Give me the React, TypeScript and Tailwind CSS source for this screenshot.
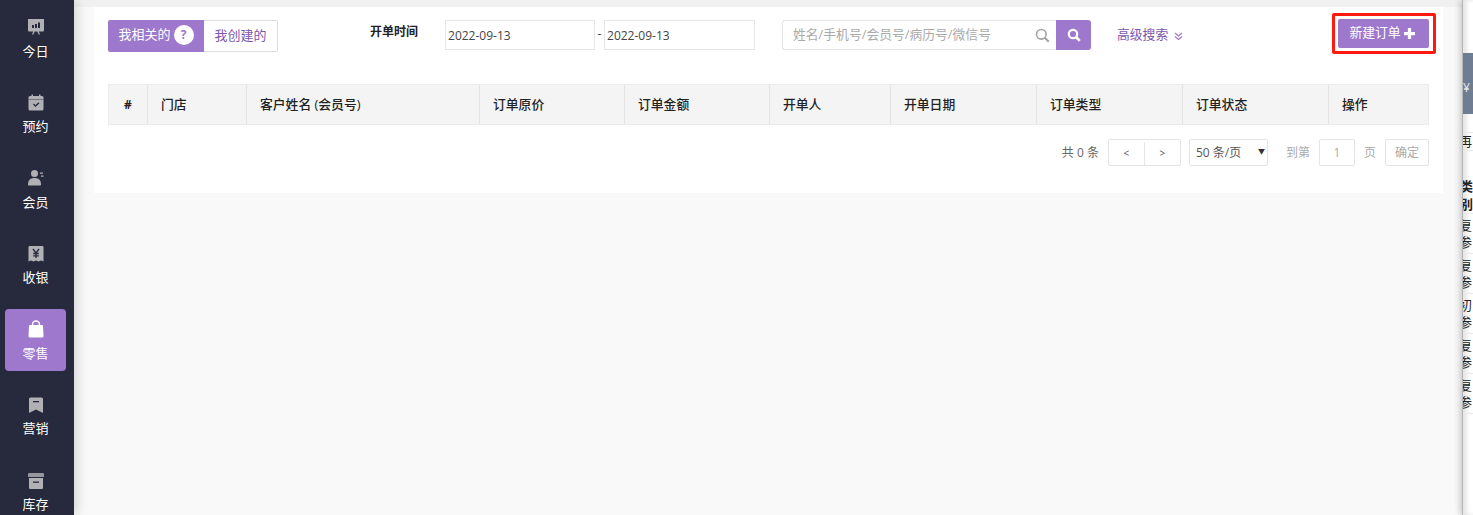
import React from "react";

const cjk = "font-['Open_Sans','Noto_Sans_CJK_SC',sans-serif]";

function BoardIcon() {
  return (
    <svg width="18" height="18" viewBox="0 0 18 18">
      <path fill="currentColor" d="M1 1h16v11.500a1 1 0 0 1-1 1h-4.200l1.200 3h-1.300l-1.400-3H7.700l-1.400 3H5l1.200-3H2a1 1 0 0 1-1-1z" />
      <path fill="#272a3d" d="M5 7h2v3H5zM8 6h2v4H8zM11 4.500h2V10h-2z" />
    </svg>
  );
}

function CalendarIcon() {
  return (
    <svg width="18" height="18" viewBox="0 0 18 18">
      <path fill="currentColor" d="M3 2h1.500V0.500H6V2h6V0.500h1.500V2H15a1.500 1.500 0 0 1 1.500 1.500V15a1.500 1.500 0 0 1-1.500 1.500H3A1.500 1.500 0 0 1 1.500 15V3.500A1.500 1.500 0 0 1 3 2z" />
      <path fill="#272a3d" d="M1.500 5h15v.8h-15z" opacity=".55" />
      <path fill="none" stroke="#272a3d" strokeWidth="1.300" d="M6.500 10l2 2 3.500-3.200" />
    </svg>
  );
}

function MemberIcon() {
  return (
    <svg width="18" height="18" viewBox="0 0 18 18">
      <circle cx="7.500" cy="4.500" r="3.500" fill="currentColor" />
      <path fill="currentColor" d="M1 15.500C1 11 3.500 9 7.500 9s6.500 2 6.500 6.500c0 .6-.5 1-1 1H2c-.5 0-1-.4-1-1z" />
      <path fill="currentColor" d="M13 3.500h3v1.200h-3zM14 6.500h2.500v1.200H14z" />
    </svg>
  );
}

function CashIcon() {
  return (
    <svg width="18" height="18" viewBox="0 0 18 18">
      <path fill="currentColor" d="M2.500 1h13a1 1 0 0 1 1 1v14.500l-2.500-1-2.500 1-2.500-1-2.500 1-2.500-1-2.500 1V2a1 1 0 0 1 1-1z" />
      <path fill="none" stroke="#272a3d" strokeWidth="1.300" d="M6 4l3 4 3-4M9 8v5M6.200 8.500h5.600M6.200 10.800h5.600" />
    </svg>
  );
}

function BagIcon() {
  return (
    <svg width="18" height="18" viewBox="0 0 18 18">
      <path fill="currentColor" d="M3 5h12a1 1 0 0 1 1 1l.5 10a1.500 1.500 0 0 1-1.500 1.500H3A1.500 1.500 0 0 1 1.500 16L2 6a1 1 0 0 1 1-1z" />
      <path fill="none" stroke="currentColor" strokeWidth="1.400" d="M5.500 7V4.500a3.500 3.500 0 0 1 7 0V7" />
    </svg>
  );
}

function BookmarkIcon() {
  return (
    <svg width="18" height="18" viewBox="0 0 18 18">
      <path fill="currentColor" d="M3.500 1.500h11A1.500 1.500 0 0 1 16 3v14l-7-3.500L2 17V3a1.500 1.500 0 0 1 1.500-1.500z" />
      <path fill="#272a3d" d="M6 5h6v1.300H6z" />
    </svg>
  );
}

function BoxIcon() {
  return (
    <svg width="18" height="18" viewBox="0 0 18 18">
      <path fill="currentColor" d="M2 1h14a1 1 0 0 1 1 1v3H1V2a1 1 0 0 1 1-1z" opacity=".8" />
      <path fill="currentColor" d="M2 6h14v10a1 1 0 0 1-1 1H3a1 1 0 0 1-1-1z" />
      <path fill="#272a3d" d="M6 9.500h6v1.300H6z" />
    </svg>
  );
}

const menu = [
  { label: "今日", icon: <BoardIcon /> },
  { label: "预约", icon: <CalendarIcon /> },
  { label: "会员", icon: <MemberIcon /> },
  { label: "收银", icon: <CashIcon /> },
  { label: "零售", icon: <BagIcon />, active: true },
  { label: "营销", icon: <BookmarkIcon /> },
  { label: "库存", icon: <BoxIcon /> },
];

const columns = [
  { title: "#", width: "w-[39px]", center: true },
  { title: "门店", width: "w-[99px]" },
  { title: "客户姓名 (会员号)", width: "w-[233px]" },
  { title: "订单原价", width: "w-[145px]" },
  { title: "订单金额", width: "w-[145px]" },
  { title: "开单人", width: "w-[121px]" },
  { title: "开单日期", width: "w-[146px]" },
  { title: "订单类型", width: "w-[146px]" },
  { title: "订单状态", width: "w-[146px]" },
  { title: "操作", width: "w-[101px]" },
];

// what shows of the next panel at the right edge
const sideRows = [
  { a: "复", b: "参" },
  { a: "复", b: "参" },
  { a: "初", b: "参" },
  { a: "复", b: "参" },
  { a: "复", b: "参" },
];

function Sidebar() {
  return (
    <aside className="relative z-10 flex h-full w-[74px] shrink-0 flex-col gap-[13.6px] overflow-hidden bg-[#272a3d] px-[5px] pt-[7px] shadow-[0_0_14px_rgba(0,0,0,0.22)]">
      {menu.map((item) => (
        <div
          key={item.label}
          className={
            item.active
              ? "flex h-[62px] w-[61px] shrink-0 flex-col items-center rounded-[4px] bg-[#9e78cd] pt-[11px] text-white"
              : "flex h-[62px] w-[61px] shrink-0 flex-col items-center pt-[11px] text-[#b0b0b5]"
          }
        >
          {item.icon}
          <span className="mt-[5.5px] text-[13px] leading-[18px] text-white">{item.label}</span>
        </div>
      ))}
    </aside>
  );
}

function Toolbar() {
  return (
    <div className="flex h-[32px] items-start">
      <div className="flex h-[32px] w-[170px] text-[13px]">
        <div className="flex w-[96px] items-center justify-center gap-[3px] rounded-l-[2px] bg-[#9e78cd] pb-[2px] text-white">
          我相关的
          <span className="flex h-[20px] w-[20px] items-center justify-center rounded-full bg-white text-[12px] font-bold text-[#9e78cd]">?</span>
        </div>
        <div className="flex flex-1 items-center justify-center rounded-r-[2px] border border-l-0 border-[#dddddd] bg-white text-[#7d57ad]">我创建的</div>
      </div>

      <span className="ml-[92px] mt-[2px] text-[12px] leading-[20px] font-bold text-[#222222]">开单时间</span>

      <div className="ml-[27px] flex h-[30px] w-[150px] items-center border border-[#e6e6e6] pl-[2px] pt-[2px] text-[12px] text-[#444444]">2022-09-13</div>
      <span className="w-[9px] pt-[5px] text-center text-[12px] leading-[18px] text-[#444444]">-</span>
      <div className="flex h-[30px] w-[151px] items-center border border-[#e6e6e6] pl-[2px] pt-[2px] text-[12px] text-[#444444]">2022-09-13</div>

      <div className="ml-[27px] flex h-[30px] w-[274px] items-center justify-between rounded-l-[3px] border border-r-0 border-[#e6e6e6] pl-[10px] pr-[6px] text-[12.8px] text-[#aaaaaa]">
        姓名/手机号/会员号/病历号/微信号
        <svg width="15" height="15" viewBox="0 0 15 15" fill="none" stroke="#a3a3a3" strokeWidth="1.600">
          <circle cx="6.300" cy="6.300" r="4.800" />
          <path d="M9.800 9.800l4 4" strokeWidth="2" />
        </svg>
      </div>
      <div className="flex h-[30px] w-[35px] items-center justify-center rounded-r-[3px] bg-[#9e78cd]">
        <svg width="14" height="14" viewBox="0 0 14 14" fill="none" stroke="#ffffff" strokeWidth="2.200">
          <circle cx="6" cy="6" r="4.200" />
          <path d="M9 9l3.800 3.800" strokeWidth="2.600" />
        </svg>
      </div>

      <div className="ml-[26px] flex h-[30px] items-center text-[12.8px] text-[#7d57ad]">
        高级搜索
        <svg className="ml-[6px] mt-[2px]" width="9" height="9" viewBox="0 0 9 9" fill="none" stroke="#9e78cd" strokeWidth="1.200">
          <path d="M1 1l3.500 3 3.500-3M1 4.500l3.500 3 3.500-3" />
        </svg>
      </div>

      <div className="-mr-[7px] -mt-[7px] ml-auto rounded-[2px] border-[3px] border-[#ff1a0f] p-[3px] pr-[4px]">
        <button className="flex h-[29px] w-[91px] items-center justify-center gap-[2px] rounded-[2px] bg-[#9e78cd] pb-[1px] pr-[2px] text-[12.8px] text-white">
          新建订单
          <svg width="13" height="13" viewBox="0 0 12 12" fill="#ffffff">
            <path d="M4.500 1h3v3.500H11v3H7.500V11h-3V7.500H1v-3h3.500z" />
          </svg>
        </button>
      </div>
    </div>
  );
}

function OrderTable() {
  return (
    <div className="mt-[32px] flex h-[41px] w-[1321px] border border-[#ebebeb] bg-[#f4f4f4]">
      {columns.map((col) => (
        <div
          key={col.title}
          className={
            col.center
              ? `${col.width} flex shrink-0 items-center justify-center border-r border-[#e4e4e4] text-[12px] font-bold text-[#222222]`
              : `${col.width} flex shrink-0 items-center border-r border-[#e4e4e4] pl-[13px] text-[12.8px] font-medium text-[#222222] last:border-r-0`
          }
        >
          {col.title}
        </div>
      ))}
    </div>
  );
}

function Pagination() {
  return (
    <div className="mt-[14px] flex h-[27px] items-center justify-end text-[12px] text-[#666666]">
      <span>共 0 条</span>
      <div className="ml-[9px] flex h-[27px] w-[73px] rounded-[2px] border border-[#e4e4e4] pt-[2px] text-[10px] text-[#555555]">
        <span className="flex flex-1 items-center justify-center border-r border-[#e4e4e4]">&lt;</span>
        <span className="flex flex-1 items-center justify-center">&gt;</span>
      </div>
      <div className="ml-[8px] flex h-[27px] w-[79px] items-center justify-between rounded-[2px] border border-[#e4e4e4] pl-[6px] pr-[2px] text-[#555555]">
        50 条/页
        <span className="text-[7px] text-[#333333]">▼</span>
      </div>
      <span className="ml-[18px] text-[#aaaaaa]">到第</span>
      <span className="ml-[9px] flex h-[27px] w-[36px] items-center justify-center rounded-[2px] border border-[#e4e4e4] text-[#aaaaaa]">1</span>
      <span className="ml-[9px] text-[#aaaaaa]">页</span>
      <span className="ml-[9px] flex h-[27px] w-[44px] items-center justify-center rounded-[2px] border border-[#e4e4e4] text-[#aaaaaa]">确定</span>
    </div>
  );
}

function RightPeek() {
  return (
    <aside className="relative z-10 h-full w-[11px] shrink-0 overflow-hidden border-l border-[#b5b5b5] bg-white pt-[53px] shadow-[-2px_0_6px_rgba(0,0,0,0.2),inset_4px_0_4px_rgba(0,0,0,0.1)]">
      <div className="flex h-[61px] items-center bg-[#6f7d92] pt-[8px] text-[12px] leading-none text-[#e6e6e6]">¥</div>
      <div className="h-[19px] border-b border-[#e8e8e8]"></div>
      <div className="flex h-[18px] items-center border-b border-[#e8e8e8] text-[13px] text-[#222222]">
        <span className="-ml-[4px] whitespace-nowrap">再</span>
      </div>
      <div className="flex h-[63px] flex-col justify-end border-b border-[#e8e8e8] text-[13px] leading-[18px] font-bold text-[#222222]">
        <span className="-ml-[3px]">类</span>
        <span className="-ml-[3px]">别</span>
      </div>
      {sideRows.map((row, i) => (
        <div key={i} className="flex h-[40px] flex-col justify-center border-b border-[#e8e8e8] text-[13px] leading-[17px] text-[#222222]">
          <span className="-ml-[4px]">{row.a}</span>
          <span className="-ml-[4px]">{row.b}</span>
        </div>
      ))}
    </aside>
  );
}

export default function App() {
  return (
    <div className={`${cjk} flex h-screen w-full overflow-hidden bg-[#f9f9f9]`}>
      <Sidebar />
      <main className="min-w-0 flex-1">
        <div className="h-[7px] bg-[#f1f1f1]"></div>
        <section className="ml-[20px] mr-[19px] h-[186px] bg-white px-[14px] pt-[13px]">
          <Toolbar />
          <OrderTable />
          <Pagination />
        </section>
      </main>
      <RightPeek />
    </div>
  );
}
